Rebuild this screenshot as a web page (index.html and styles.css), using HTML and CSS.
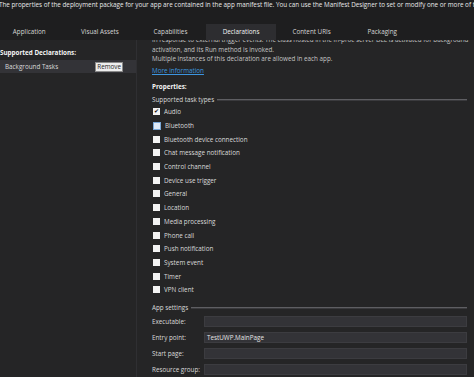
FILE: index.html
```html
<!DOCTYPE html>
<html lang="en">
<head>
  <meta charset="UTF-8">
  <title>Package.appxmanifest</title>
  <link rel="stylesheet" href="styles.css">
</head>
<body>
  <div class="intro">The properties of the deployment package for your app are contained in the app manifest file. You can use the Manifest Designer to set or modify one or more of the properties.</div>

  <div class="tabs">
    <div class="tab">Application</div>
    <div class="tab">Visual Assets</div>
    <div class="tab">Capabilities</div>
    <div class="tab active">Declarations</div>
    <div class="tab">Content URIs</div>
    <div class="tab">Packaging</div>
  </div>

  <div class="main">
    <div class="left">
      <div class="titulo">Supported Declarations:</div>
      <div class="decl-row">
        <span>Background Tasks</span>
        <button class="btn-remove">Remove</button>
      </div>
    </div>

    <div class="right">
      <div class="scroll">
        <p class="desc">In response to external trigger events. The class hosted in the in-proc server DLL is activated for background<br>activation, and its Run method is invoked.</p>
        <p class="desc">Multiple instances of this declaration are allowed in each app.</p>
        <a class="link" href="#">More information</a>

        <div class="titulo props">Properties:</div>

        <div class="group">Supported task types<span class="rule"></span></div>
        <div class="checks">
          <label class="check"><span class="box checked">&#10004;</span>Audio</label>
          <label class="check"><span class="box hover"></span>Bluetooth</label>
          <label class="check"><span class="box"></span>Bluetooth device connection</label>
          <label class="check"><span class="box"></span>Chat message notification</label>
          <label class="check"><span class="box"></span>Control channel</label>
          <label class="check"><span class="box"></span>Device use trigger</label>
          <label class="check"><span class="box"></span>General</label>
          <label class="check"><span class="box"></span>Location</label>
          <label class="check"><span class="box"></span>Media processing</label>
          <label class="check"><span class="box"></span>Phone call</label>
          <label class="check"><span class="box"></span>Push notification</label>
          <label class="check"><span class="box"></span>System event</label>
          <label class="check"><span class="box"></span>Timer</label>
          <label class="check"><span class="box"></span>VPN client</label>
        </div>

        <div class="group settings">App settings<span class="rule"></span></div>
        <div class="campo"><span class="etiqueta">Executable:</span><span class="input"></span></div>
        <div class="campo"><span class="etiqueta">Entry point:</span><span class="input">TestUWP.MainPage</span></div>
        <div class="campo"><span class="etiqueta">Start page:</span><span class="input"></span></div>
        <div class="campo"><span class="etiqueta">Resource group:</span><span class="input"></span></div>
      </div>
    </div>
  </div>
</body>
</html>
```

FILE: styles.css
```css
/* Manifest designer, tema oscuro */
body {
  margin: 0;
  width: 474px;
  height: 377px;
  overflow: hidden;
  font-family: "Open Sans", "Liberation Sans", sans-serif;
  font-size: 6.3px;
  background-color: #252526;
  color: #dadada;
}
.intro {
  height: 24px;
  line-height: 10px;
  margin-left: -1px;
  white-space: nowrap;
  overflow: hidden;
  background-color: #1e1e1f;
  color: #e8e8e8;
}
.tabs {
  display: flex;
  height: 16px;
  margin-left: -6px;
  background-color: #1e1e1f;
}
.tab {
  width: 70.6px;
  flex: none;
  line-height: 16px;
  text-align: center;
  color: #d4d4d4;
}
.tab.active {
  background-color: #2d2d30;
  color: #f4f4f4;
}
.main {
  display: flex;
  height: 337px;
}
.left {
  width: 136px;
  flex: none;
  padding-top: 8px;
  border-right: 1px solid #2f2f32;
}
.titulo {
  font-weight: bold;
  color: #f4f4f4;
  line-height: 10px;
}
.decl-row {
  display: flex;
  align-items: center;
  justify-content: space-between;
  height: 13px;
  margin-top: 2px;
  padding: 0 13px 0 5px;
  background-color: #333337;
}
.btn-remove {
  height: 10px;
  padding: 0 1px;
  border: 1px solid #8a8a8a;
  background-color: #eeeeee;
  color: #1e1e1e;
  font-family: inherit;
  font-size: 6.3px;
  line-height: 7px;
}
.right {
  flex: 1;
  overflow: hidden;
  padding-left: 15px;
  padding-right: 7px;
}
.scroll {
  margin-top: -5px;
}
.desc {
  margin: 0 0 1.5px;
  line-height: 10px;
  white-space: nowrap;
  color: #c4c4c4;
}
.desc:first-child {
  margin-bottom: 0;
  line-height: 9.5px;
}
.link {
  display: block;
  line-height: 10px;
  color: #3c95df;
}
.props {
  margin-top: 6px;
}
.group {
  display: flex;
  align-items: center;
  gap: 3px;
  margin-top: 3px;
  line-height: 10px;
}
.rule {
  flex: 1;
  border-top: 1px solid #5e5e62;
  border-bottom: 1px solid #3a3a3d;
}
.checks {
  margin-top: 0.5px;
}
.check {
  display: flex;
  align-items: center;
  height: 13.7px;
}
.box {
  width: 7px;
  height: 7px;
  margin: 0 4px 0 1px;
  background-color: #f3f3f3;
  color: #111;
  font-size: 6px;
  line-height: 7px;
  text-align: center;
}
.box.hover {
  width: 6px;
  height: 6px;
  background-color: #dfeaf7;
  border: 0.5px solid #7aa8d8;
}
.checks + .settings {
  margin-top: 6px;
}
.settings + .campo {
  margin-top: 1px;
}
.campo {
  display: flex;
  align-items: center;
  height: 16px;
}
.etiqueta {
  width: 52px;
  flex: none;
}
.input {
  flex: 1;
  height: 9px;
  line-height: 9px;
  padding-left: 2px;
  background-color: #333337;
  border: 1px solid #3c3c40;
  color: #e4e4e4;
}
```
